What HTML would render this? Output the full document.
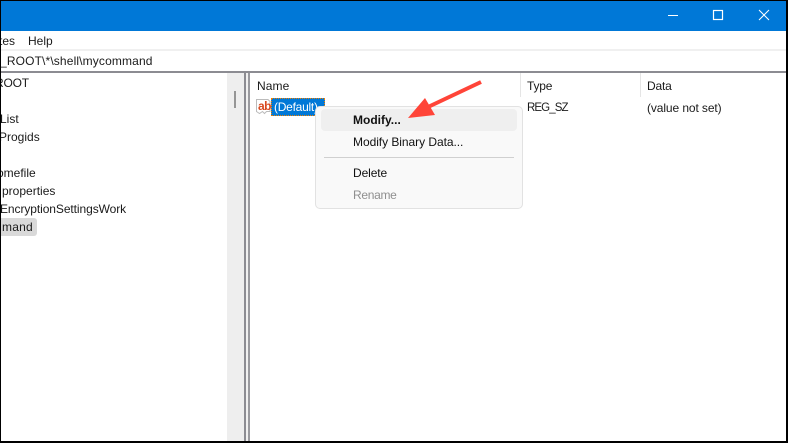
<!DOCTYPE html>
<html><head><meta charset="utf-8">
<style>
html,body{margin:0;padding:0;background:#fff}
#r{position:relative;width:788px;height:443px;overflow:hidden;background:#fff;font-family:"Liberation Sans",sans-serif;font-size:12px;color:#1a1a1a}
#r div{position:absolute}
.t{white-space:nowrap;line-height:16px;height:16px}
</style></head><body>
<div id="r">
<div style="left:0;top:1px;width:788px;height:30px;background:#0078d7"></div>
<div style="left:0;top:49px;width:788px;height:2px;background:#f0f0f0"></div>
<div style="left:0;top:71px;width:788px;height:2px;background:#8c8c92"></div>
<svg style="position:absolute;left:660px;top:5px" width="128" height="22" fill="none" stroke="#fff" stroke-width="1">
<path d="M8 10.5H18"/><rect x="53.5" y="5.5" width="9" height="9" stroke-width="1.2"/><path d="M99 5l10 10M109 5l-10 10"/>
</svg>
<div class="t" style="left:-1px;top:33px">tes</div>
<div class="t" style="left:28px;top:33px">Help</div>
<div class="t" style="left:0;top:53px;letter-spacing:.14px">_ROOT\*\shell\mycommand</div>
<div class="t" style="left:-5px;top:75px;letter-spacing:-.2px">ROOT</div>
<div class="t" style="left:0;top:111px">List</div>
<div class="t" style="left:-1px;top:129px">Progids</div>
<div class="t" style="left:-3px;top:165px">omefile</div>
<div class="t" style="left:2px;top:183px">properties</div>
<div class="t" style="left:0;top:201px;letter-spacing:-.08px">EncryptionSettingsWork</div>
<div style="left:0;top:218px;width:37px;height:18px;background:#d9d9d9;border-radius:0 3px 3px 0"></div>
<div class="t" style="left:2px;top:219px;letter-spacing:.2px">mand</div>
<div style="left:227px;top:73px;width:17px;height:370px;background:#eee"></div>
<div style="left:234px;top:91px;width:2px;height:17px;background:#959595"></div>
<div style="left:244px;top:73px;width:2px;height:370px;background:#8c8c92"></div>
<div style="left:246px;top:73px;width:2px;height:370px;background:#f0f0f0"></div>
<div style="left:248px;top:73px;width:2px;height:370px;background:#9a9a9f"></div>
<div class="t" style="left:257px;top:78px;letter-spacing:.1px">Name</div>
<div style="left:520px;top:73px;width:1px;height:24px;background:#e5e5e5"></div>
<div class="t" style="left:527px;top:78px;letter-spacing:-.2px">Type</div>
<div style="left:640px;top:73px;width:1px;height:24px;background:#e5e5e5"></div>
<div class="t" style="left:647px;top:78px;letter-spacing:-.2px">Data</div>
<div class="t" style="left:527px;top:100px;font-size:11.5px;letter-spacing:-.9px">REG_SZ</div>
<div class="t" style="left:647px;top:100px;letter-spacing:-.1px">(value not set)</div>
<svg style="position:absolute;left:255px;top:98px" width="16" height="18"><path d="M1.5 1.5H13L15 3.5V13.5H11.5L9.5 15.5 7.5 13.5 4.5 15.5 1.5 13.5Z" fill="#fff" stroke="#bbb"/></svg>
<div style="left:258px;top:100px;font:bold 12px/12px 'Liberation Sans',sans-serif;color:#d8481f;letter-spacing:-.6px">ab</div>
<div style="left:271px;top:98px;width:52px;height:16px;background:#0078d7;border:1px dotted #f08000"></div>
<div class="t" style="left:274px;top:99px;color:#fff;letter-spacing:-.25px">(Default)</div>
<div style="left:315px;top:106px;width:206px;height:101px;background:#f9f9f9;border:1px solid #e2e2e2;border-radius:5px"></div>
<div style="left:321px;top:109px;width:196px;height:22px;background:#efefef;border-radius:4px"></div>
<div class="t" style="left:353px;top:112px;font-weight:bold;color:#111">Modify...</div>
<div class="t" style="left:353px;top:134px;letter-spacing:-.05px;color:#111">Modify Binary Data...</div>
<div style="left:324px;top:157px;width:190px;height:1px;background:#d0d0d0"></div>
<div class="t" style="left:353px;top:165px;letter-spacing:-.1px;color:#111">Delete</div>
<div class="t" style="left:353px;top:187px;letter-spacing:-.3px;color:#8f8f8f">Rename</div>
<svg style="position:absolute;left:0;top:0" width="788" height="443">
<path d="M481 82L428 107" stroke="#ff4438" stroke-width="4" fill="none"/>
<path d="M408 118L425 98L435 115Z" fill="#ff4438"/>
</svg>
<div style="left:0;top:0;width:788px;height:1px;background:#000"></div>
<div style="left:0;top:0;width:1px;height:443px;background:#000"></div>
<div style="left:786px;top:0;width:2px;height:443px;background:#000"></div>
<div style="left:0;top:441px;width:788px;height:2px;background:#000"></div>
</div>
</body></html>
